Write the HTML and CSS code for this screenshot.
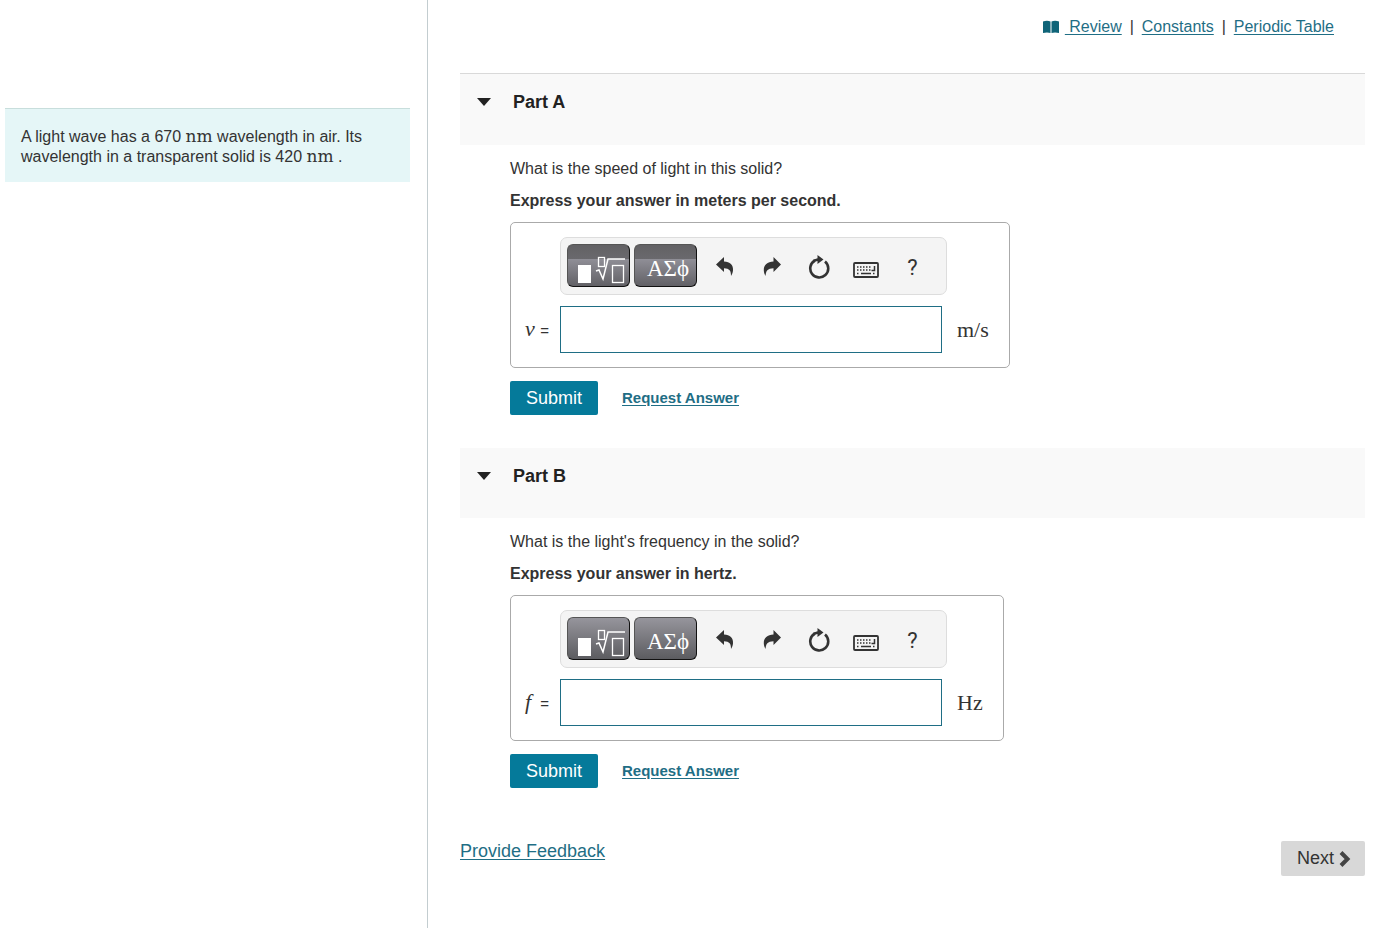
FILE: index.html
```html
<!DOCTYPE html>
<html lang="en">

<head>
    <meta charset="UTF-8">
    <meta name="viewport" content="width=device-width, initial-scale=1.0">
    <title>Light wave in a solid</title>
    <link rel="stylesheet" href="styles.css">
</head>

<body>
    <!-- Shared icons -->
    <svg class="sprite" aria-hidden="true">
        <symbol id="icon-templates" viewBox="0 0 48 28">
            <rect x="1" y="9" width="13" height="18" fill="#fff" />
            <rect x="21.500" y="1.500" width="6" height="9" fill="none" stroke="#fff" stroke-width="1.300" />
            <path d="M19 15l3-1 4 9 5-20h17" fill="none" stroke="#fff" stroke-width="1.500" />
            <rect x="35.500" y="9.500" width="11" height="17" fill="none" stroke="#fff" stroke-width="1.300" />
        </symbol>
        <symbol id="icon-undo" viewBox="0 0 18 20">
            <path d="M0 7.500L8 0v4.500c6 .3 9.500 3.500 9 9-.2 2-1 4-2 5.500.2-5-1.500-7.500-7-7.700V15z" fill="#333" />
        </symbol>
        <symbol id="icon-redo" viewBox="0 0 18 20">
            <path d="M18 7.500L10.500 0v4.500C4.500 4.800.5 8 .8 13.500c.1 2 .8 4 1.800 5.500.2-5 2-7.500 7.900-7.700V15z" fill="#333" />
        </symbol>
        <symbol id="icon-reset" viewBox="0 0 22 24">
            <path d="M7 5.500A9 9 0 1 0 17 6.500" fill="none" stroke="#333" stroke-width="2.600" />
            <path d="M9.500 0l6 4.500-6 4.500V6L6.500 6.800 5 4.800l4.500-1.500z" fill="#333" />
        </symbol>
        <symbol id="icon-keyboard" viewBox="0 0 26 16">
            <rect x="1" y="1" width="24" height="14" rx="1" fill="none" stroke="#333" stroke-width="1.800" />
            <path d="M4 5h14M4 8h15M4 11.500h2M20 11.500h2" stroke="#333" stroke-width="1.500" stroke-dasharray="1.500 1.500" />
            <path d="M8 11.500h10M21.500 4v4.500h-3" fill="none" stroke="#333" stroke-width="1.500" />
        </symbol>
    </svg>

    <div class="page">
        <aside class="side">
            <p class="problem">A light wave has a 670 <span class="nm">nm</span> wavelength in air. Its wavelength in
                a transparent solid is 420 <span class="nm">nm</span> .</p>
        </aside>

        <main class="main">
            <nav class="top-links">
                <svg class="book" viewBox="0 0 16 14" aria-hidden="true">
                    <path d="M0 1.500C2.500 .5 5.500.5 7.500 1.500V13C5.500 12.300 2.500 12.300 0 13zM16 1.500C13.500.5 10.500.5 8.500 1.500V13c2-.7 5-.7 7.500 0z" fill="#0f6478" />
                </svg>
                <a href="#review">&nbsp;Review</a>
                <span class="bar">|</span>
                <a href="#constants">Constants</a>
                <span class="bar">|</span>
                <a href="#periodic-table">Periodic Table</a>
            </nav>

            <section>
                <header class="part-header part-header-first">
                    <button type="button" class="toggle" aria-label="Collapse Part A"></button>
                    <h2>Part A</h2>
                </header>
                <div class="part-body">
                    <p class="question">What is the speed of light in this solid?</p>
                    <p class="hint">Express your answer in meters per second.</p>
                    <div class="answer">
                        <div class="toolbar">
                            <button type="button" class="palette palette-split" aria-label="Templates"><svg class="templates"><use href="#icon-templates" /></svg></button>
                            <button type="button" class="palette palette-split palette-greek">ΑΣϕ</button>
                            <button type="button" class="tool" aria-label="Undo"><svg width="18" height="20"><use href="#icon-undo" /></svg></button>
                            <button type="button" class="tool" aria-label="Redo"><svg width="18" height="20"><use href="#icon-redo" /></svg></button>
                            <button type="button" class="tool" aria-label="Reset"><svg width="22" height="24"><use href="#icon-reset" /></svg></button>
                            <button type="button" class="tool tool-low" aria-label="Keyboard shortcuts"><svg width="26" height="16"><use href="#icon-keyboard" /></svg></button>
                            <button type="button" class="tool">?</button>
                        </div>
                        <label class="symbol" for="speed"><i>v</i> =</label>
                        <input type="text" class="answer-input" id="speed" autocomplete="off">
                        <span class="unit">m/s</span>
                    </div>
                    <div class="actions">
                        <button type="button" class="submit">Submit</button>
                        <a class="request" href="#answer-a">Request Answer</a>
                    </div>
                </div>
            </section>

            <section>
                <header class="part-header">
                    <button type="button" class="toggle" aria-label="Collapse Part B"></button>
                    <h2>Part B</h2>
                </header>
                <div class="part-body">
                    <p class="question">What is the light's frequency in the solid?</p>
                    <p class="hint">Express your answer in hertz.</p>
                    <div class="answer">
                        <div class="toolbar">
                            <button type="button" class="palette" aria-label="Templates"><svg class="templates"><use href="#icon-templates" /></svg></button>
                            <button type="button" class="palette palette-greek">ΑΣϕ</button>
                            <button type="button" class="tool" aria-label="Undo"><svg width="18" height="20"><use href="#icon-undo" /></svg></button>
                            <button type="button" class="tool" aria-label="Redo"><svg width="18" height="20"><use href="#icon-redo" /></svg></button>
                            <button type="button" class="tool" aria-label="Reset"><svg width="22" height="24"><use href="#icon-reset" /></svg></button>
                            <button type="button" class="tool tool-low" aria-label="Keyboard shortcuts"><svg width="26" height="16"><use href="#icon-keyboard" /></svg></button>
                            <button type="button" class="tool">?</button>
                        </div>
                        <label class="symbol" for="frequency"><i>f</i> =</label>
                        <input type="text" class="answer-input" id="frequency" autocomplete="off">
                        <span class="unit">Hz</span>
                    </div>
                    <div class="actions">
                        <button type="button" class="submit">Submit</button>
                        <a class="request" href="#answer-b">Request Answer</a>
                    </div>
                </div>
            </section>

            <footer class="footer">
                <a href="#feedback">Provide Feedback</a>
                <button type="button" class="next">Next
                    <svg width="12" height="16" viewBox="0 0 12 16" aria-hidden="true"><path d="M2 1.500L8.500 8 2 14.500" fill="none" stroke="#444" stroke-width="4" /></svg>
                </button>
            </footer>
        </main>
    </div>
</body>

</html>
```

FILE: styles.css
```css
* {
    box-sizing: border-box;
}

body {
    margin: 0;
    background: #fff;
    color: #333;
    font: 16px/20px "Liberation Sans", Arial, sans-serif;
}

a {
    color: #1f6e85;
    text-underline-offset: 2px;
}

p,
h2 {
    margin: 0;
}

button {
    padding: 0;
    border: 0;
    background: none;
    color: #333;
    font-family: inherit;
    cursor: pointer;
}

.sprite {
    position: absolute;
    width: 0;
    height: 0;
}

.page {
    display: flex;
    min-height: 100vh;
}

.side {
    flex: none;
    width: 428px;
    padding: 108px 17px 0 5px;
    border-right: 1px solid #c3cdd0;
}

.problem {
    padding: 18px 16px 15px;
    border-top: 1px solid #c8dedc;
    background: #e5f6f7;
}

.nm {
    font-family: "DejaVu Serif", serif;
    font-size: 17px;
    line-height: 16px;
}

.main {
    flex: 1;
    padding: 17px 26px 0 32px;
}

.top-links {
    display: flex;
    justify-content: flex-end;
    align-items: center;
    margin-right: 31px;
    margin-bottom: 36px;
}

.book {
    width: 16px;
    height: 14px;
    margin-right: 6px;
}

.bar {
    width: 20px;
    text-align: center;
}

/* Part headings */
.part-header {
    display: flex;
    align-items: flex-start;
    height: 70px;
    padding: 18px 17px;
    background: #f9f9f9;
}

.part-header-first {
    height: 72px;
    border-top: 1px solid #d9d9d9;
}

.part-header h2 {
    color: #222;
    font-size: 18px;
    line-height: 20px;
}

.toggle {
    width: 14px;
    height: 8px;
    margin: 6px 22px 0 0;
    background: #222;
    clip-path: polygon(0 0, 100% 0, 50% 100%);
}

.part-body {
    padding: 14px 0 33px 50px;
}

.question {
    margin-bottom: 12px;
}

.hint {
    margin-bottom: 11px;
    font-weight: bold;
}

/* Answer box */
.answer {
    display: inline-grid;
    grid-template-columns: 35px 382px auto;
    align-items: center;
    row-gap: 11px;
    padding: 14px 20px 14px 14px;
    border: 1px solid #aaa;
    border-radius: 5px;
    vertical-align: top;
}

.unit {
    margin-left: 15px;
    font-family: "Liberation Serif", "Times New Roman", serif;
    font-size: 22px;
}

.toolbar {
    display: flex;
    grid-column: 2 / 4;
    justify-self: start;
    height: 58px;
    padding: 6px 10px 6px 6px;
    border: 1px solid #ddd;
    border-radius: 7px;
    background: #f4f4f4;
}

.palette {
    width: 63px;
    height: 43px;
    margin-right: 4px;
    padding-left: 9px;
    border: 1px solid #111;
    border-top-color: #555;
    border-left-color: #555;
    border-radius: 6px;
    background: linear-gradient(#96959c, #5c5c60);
}

.palette-split {
    background: linear-gradient(#626164 0, #6a696d 34%, #8f8e96 35%, #626166 100%);
}

.palette-greek {
    padding: 6px 0 0 5px;
    color: #fff;
    font: 23px "Liberation Serif", "Times New Roman", serif;
}

.templates {
    display: block;
    width: 48px;
    height: 28px;
    margin-top: 8px;
}

.tool {
    display: flex;
    justify-content: center;
    align-items: center;
    width: 47px;
    height: 46px;
    font: 22px Roboto, sans-serif;
}

.tool-low {
    padding-top: 6px;
}

.symbol {
    display: flex;
    justify-content: space-between;
    align-items: baseline;
    padding-right: 11px;
    font-size: 15px;
}

.symbol i {
    font-family: "Liberation Serif", "Times New Roman", serif;
    font-size: 22px;
}

.answer-input {
    width: 100%;
    height: 47px;
    padding: 0 10px;
    border: 1px solid #1f6e85;
    background: #fff;
    font: inherit;
}

.actions {
    display: flex;
    align-items: center;
    margin-top: 13px;
}

.submit {
    height: 34px;
    margin-right: 24px;
    padding: 0 16px;
    border-radius: 2px;
    background: #057a9a;
    color: #fff;
    font-size: 18px;
}

.request {
    font-size: 15px;
    font-weight: bold;
}

.footer {
    display: flex;
    justify-content: space-between;
    align-items: flex-start;
    margin-top: 20px;
    font-size: 18px;
}

.next {
    display: flex;
    align-items: center;
    gap: 5px;
    height: 35px;
    padding: 0 14px 0 16px;
    border-radius: 2px;
    background: #d8d8d8;
    font-size: 18px;
}
```
